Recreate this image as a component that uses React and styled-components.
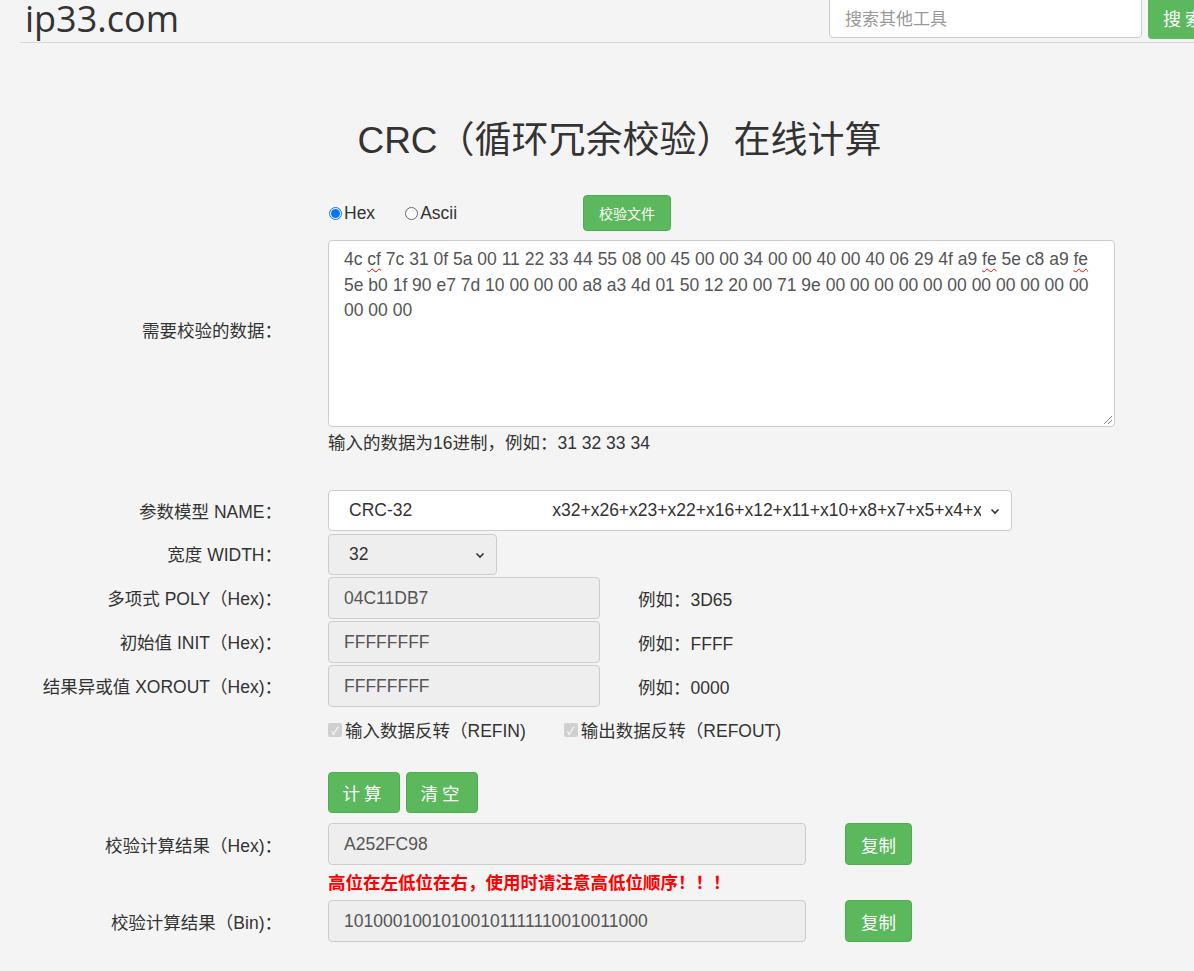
import React from "react";
import styled, { createGlobalStyle } from "styled-components";

const G = createGlobalStyle`
  body{margin:0;background:#f4f4f4;font-family:"Liberation Sans","Noto Sans CJK SC",sans-serif;color:#333;font-size:17.5px;overflow:hidden;}
`;
const Header = styled.div`
  height:42px;margin-left:20px;border-bottom:1px solid #d6d6d6;display:flex;align-items:center;position:relative;
`;
const Logo = styled.div`font-family:"Open Sans","Liberation Sans",sans-serif;font-size:36px;color:#333;margin-left:5px;margin-top:-6px;`;
const Search = styled.div`position:absolute;left:809px;top:-4px;display:flex;gap:6px;`;
const SInput = styled.div`width:313px;height:42px;box-sizing:border-box;background:#fff;border:1px solid #ccc;border-radius:4px;padding:0 15px;display:flex;align-items:center;color:#999;font-size:17px;`;
const SBtn = styled.div`width:60px;height:43px;background:#5cb85c;border-radius:4px;color:#fff;font-size:18px;display:flex;align-items:center;padding-left:15px;letter-spacing:4px;`;
const Title = styled.h1`font-weight:normal;font-size:37px;text-align:center;margin:74px 0 0;padding-left:45px;color:#333;line-height:48px;`;
const Form = styled.div`display:grid;grid-template-columns:282px 1fr;column-gap:46px;margin-top:14px;`;
const Label = styled.div`text-align:right;align-self:center;`;
const Cell = styled.div`display:flex;align-items:center;gap:${p=>p.gap||0}px;margin-top:${p=>p.mt||0}px;`;
const Radio = styled.label`display:flex;align-items:center;margin-right:${p=>p.mr}px;`;
const RDot = styled.span`width:13px;height:13px;border-radius:50%;box-sizing:border-box;border:${p=>p.on?"1px solid #0075ff":"1px solid #666"};background:#fff;display:inline-flex;align-items:center;justify-content:center;margin:0 2px 0 1px;
  &::after{content:"";width:9px;height:9px;border-radius:50%;background:${p=>p.on?"#0075ff":"transparent"};}`;
const Btn = styled.div`background:#5cb85c;border:1px solid #4cae4c;border-radius:4px;color:#fff;display:flex;align-items:center;justify-content:center;box-sizing:border-box;
  width:${p=>p.w}px;height:${p=>p.h}px;font-size:${p=>p.fs||17.5}px;letter-spacing:${p=>p.ls||0}px;`;
const TA = styled.div`width:787px;height:187px;box-sizing:border-box;background:#fff;border:1px solid #ccc;border-radius:4px;padding:6px 15px;line-height:25.5px;color:#555;position:relative;margin-top:9px;
  &::after{content:"";position:absolute;right:2px;bottom:2px;width:8px;height:8px;background:linear-gradient(135deg,transparent 45%,#888 45%,#888 52%,transparent 52%,transparent 70%,#888 70%,#888 77%,transparent 77%);}`;
const Wavy = styled.span`text-decoration:underline wavy red;text-underline-offset:3px;text-decoration-thickness:1px;`;
const Select = styled.div`width:${p=>p.w}px;height:41px;box-sizing:border-box;border:1px solid #ccc;border-radius:4px;background:${p=>p.bg};display:flex;align-items:center;padding:0 10px 0 20px;color:#333;white-space:nowrap;overflow:hidden;`;
const Clip = styled.span`margin-left:140px;overflow:hidden;flex:1;min-width:0;`;
const Field = styled.div`width:${p=>p.w}px;height:42px;box-sizing:border-box;border:1px solid #ccc;border-radius:4px;background:#eee;display:flex;align-items:center;padding:0 15px;color:#555;`;
const Eg = styled.span`margin-left:38px;`;
const Check = styled.span`width:14px;height:14px;border-radius:2px;background:#d0d0d0;display:inline-flex;align-items:center;justify-content:center;margin-right:3px;color:#fff;font-size:11px;`;
const Red = styled.div`color:#f00;font-weight:bold;grid-column:2;margin-top:4px;`;
const Chev = () => <svg width="12" height="12" viewBox="0 0 12 12" style={{marginLeft:8,flexShrink:0}}><path d="M2.5 4.5 6 8l3.5-3.5" stroke="#333" strokeWidth="1.6" fill="none"/></svg>;

export default function App(){
  return <>
    <G/>
    <Header>
      <Logo>ip33.com</Logo>
      <Search><SInput>搜索其他工具</SInput><SBtn>搜索</SBtn></Search>
    </Header>
    <Title>CRC（循环冗余校验）在线计算</Title>
    <Form>
      <div/>
      <Cell mt={16}>
        <Radio mr={29}><RDot on/>Hex</Radio>
        <Radio mr={126}><RDot/>Ascii</Radio>
        <Btn w={88} h={36} fs={14}>校验文件</Btn>
      </Cell>
      <Label>需要校验的数据：</Label>
      <TA>4c <Wavy>cf</Wavy> 7c 31 0f 5a 00 11 22 33 44 55 08 00 45 00 00 34 00 00 40 00 40 06 29 4f a9 <Wavy>fe</Wavy> 5e c8 a9 <Wavy>fe</Wavy> 5e b0 1f 90 e7 7d 10 00 00 00 a8 a3 4d 01 50 12 20 00 71 9e 00 00 00 00 00 00 00 00 00 00 00 00 00 00</TA>
      <div/>
      <Cell mt={2}>输入的数据为16进制，例如：31 32 33 34</Cell>
      <Label style={{marginTop:36}}>参数模型 NAME：</Label>
      <Cell mt={36}><Select w={684} bg="#fff">CRC-32<Clip>x32+x26+x23+x22+x16+x12+x11+x10+x8+x7+x5+x4+x2+x1+1</Clip><Chev/></Select></Cell>
      <Label>宽度 WIDTH：</Label>
      <Cell mt={3}><Select w={169} bg="#eee"><span style={{flex:1}}>32</span><Chev/></Select></Cell>
      <Label>多项式 POLY（Hex)：</Label>
      <Cell mt={2}><Field w={272}>04C11DB7</Field><Eg>例如：3D65</Eg></Cell>
      <Label>初始值 INIT（Hex)：</Label>
      <Cell mt={2}><Field w={272}>FFFFFFFF</Field><Eg>例如：FFFF</Eg></Cell>
      <Label>结果异或值 XOROUT（Hex)：</Label>
      <Cell mt={2}><Field w={272}>FFFFFFFF</Field><Eg>例如：0000</Eg></Cell>
      <div/>
      <Cell mt={10}><Check>✓</Check>输入数据反转（REFIN)<span style={{width:38}}/><Check>✓</Check>输出数据反转（REFOUT)</Cell>
      <div/>
      <Cell mt={30} gap={6}><Btn w={72} h={41} ls={4}>计算</Btn><Btn w={72} h={41} ls={4}>清空</Btn></Cell>
      <Label style={{marginTop:10}}>校验计算结果（Hex)：</Label>
      <Cell mt={10}><Field w={478}>A252FC98</Field><span style={{width:39}}/><Btn w={67} h={42}>复制</Btn></Cell>
      <Red>高位在左低位在右，使用时请注意高低位顺序！！！</Red>
      <Label style={{marginTop:6}}>校验计算结果（Bin)：</Label>
      <Cell mt={6}><Field w={478}>10100010010100101111110010011000</Field><span style={{width:39}}/><Btn w={67} h={42}>复制</Btn></Cell>
    </Form>
  </>;
}
